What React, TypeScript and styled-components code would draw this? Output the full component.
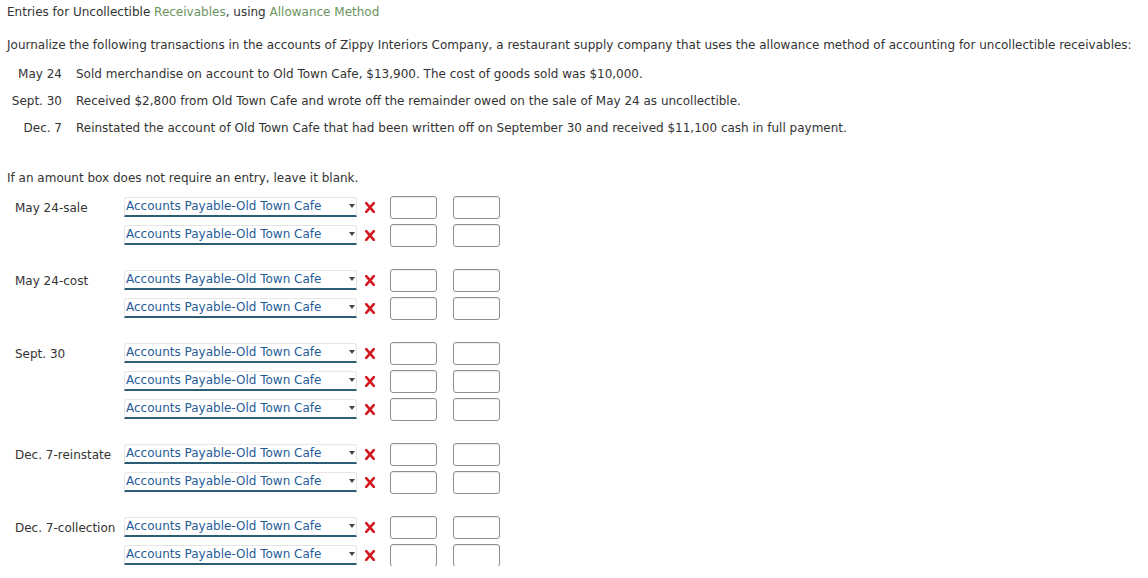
import React from "react";
import styled, { createGlobalStyle } from "styled-components";

const GlobalStyle = createGlobalStyle`
  body {
    margin: 0;
    background: #fff;
    font-family: "DejaVu Sans", Verdana, sans-serif;
    font-size: 12px;
    color: #333;
  }
`;

const Page = styled.div`
  padding: 4px 0 0 7px;
`;

const Title = styled.div`
  line-height: 16px;
`;

const Term = styled.span`
  color: #6b9460;
`;

const Intro = styled.p`
  margin: 17px 0 0;
  line-height: 16px;
  white-space: nowrap;
`;

const TxTable = styled.div`
  display: grid;
  grid-template-columns: 55px auto;
  column-gap: 14px;
  row-gap: 11px;
  margin-top: 13px;
  line-height: 16px;
`;

const TxDate = styled.div`
  text-align: right;
`;

const Note = styled.p`
  margin: 34px 0 0;
  line-height: 16px;
`;

const Journal = styled.div`
  display: flex;
  flex-direction: column;
  gap: 22px;
  margin-top: 9px;
  padding-left: 8px;
`;

const Entry = styled.div`
  display: flex;
  align-items: flex-start;
`;

const EntryLabel = styled.div`
  width: 109px;
  line-height: 22px;
  padding-top: 2px;
  white-space: nowrap;
`;

const Lines = styled.div`
  display: flex;
  flex-direction: column;
  gap: 6px;
  padding-top: 1px;
`;

const Line = styled.div`
  display: flex;
  align-items: center;
  height: 22px;
`;

const Select = styled.div`
  position: relative;
  box-sizing: border-box;
  width: 233px;
  height: 20px;
  padding-left: 1px;
  border: 1px solid #e6e6e6;
  border-bottom: 2px solid #2b5e74;
  border-radius: 3px 3px 0 0;
  color: #1f5c99;
  line-height: 16px;
  white-space: nowrap;
`;

const Arrow = styled.span`
  position: absolute;
  right: 1px;
  top: 6px;
  width: 0;
  height: 0;
  border-left: 3.5px solid transparent;
  border-right: 3.5px solid transparent;
  border-top: 4px solid #444;
`;

const Wrong = styled.svg`
  margin-left: 8px;
  width: 10px;
  height: 11px;
  flex: none;
`;

const Amount = styled.div<{ $first?: boolean }>`
  box-sizing: border-box;
  width: 47px;
  height: 23px;
  margin-left: ${p => (p.$first ? "15px" : "16px")};
  border: 1px solid #8f8f8f;
  border-radius: 3px;
  box-shadow: inset 0 1px 1px rgba(0, 0, 0, 0.08);
  background: #fff;
`;

const account = "Accounts Payable-Old Town Cafe";

const entries = [
  { label: "May 24-sale", lines: 2 },
  { label: "May 24-cost", lines: 2 },
  { label: "Sept. 30", lines: 3 },
  { label: "Dec. 7-reinstate", lines: 2 },
  { label: "Dec. 7-collection", lines: 2 },
];

const transactions = [
  ["May 24", "Sold merchandise on account to Old Town Cafe, $13,900. The cost of goods sold was $10,000."],
  ["Sept. 30", "Received $2,800 from Old Town Cafe and wrote off the remainder owed on the sale of May 24 as uncollectible."],
  ["Dec. 7", "Reinstated the account of Old Town Cafe that had been written off on September 30 and received $11,100 cash in full payment."],
];

export default function App() {
  return (
    <Page>
      <GlobalStyle />
      <Title>
        Entries for Uncollectible <Term>Receivables</Term>, using <Term>Allowance Method</Term>
      </Title>
      <Intro>
        Journalize the following transactions in the accounts of Zippy Interiors Company, a restaurant supply company
        that uses the allowance method of accounting for uncollectible receivables:
      </Intro>
      <TxTable>
        {transactions.map(([date, text]) => (
          <React.Fragment key={date}>
            <TxDate>{date}</TxDate>
            <div>{text}</div>
          </React.Fragment>
        ))}
      </TxTable>
      <Note>If an amount box does not require an entry, leave it blank.</Note>
      <Journal>
        {entries.map(entry => (
          <Entry key={entry.label}>
            <EntryLabel>{entry.label}</EntryLabel>
            <Lines>
              {Array.from({ length: entry.lines }).map((_, i) => (
                <Line key={i}>
                  <Select>
                    {account}
                    <Arrow />
                  </Select>
                  <Wrong viewBox="0 0 10 11">
                    <path d="M1.2 1.2 L8.8 9.8 M8.8 1.2 L1.2 9.8" stroke="#d4181f" strokeWidth="2.6" strokeLinecap="round" fill="none" />
                  </Wrong>
                  <Amount $first />
                  <Amount />
                </Line>
              ))}
            </Lines>
          </Entry>
        ))}
      </Journal>
    </Page>
  );
}
